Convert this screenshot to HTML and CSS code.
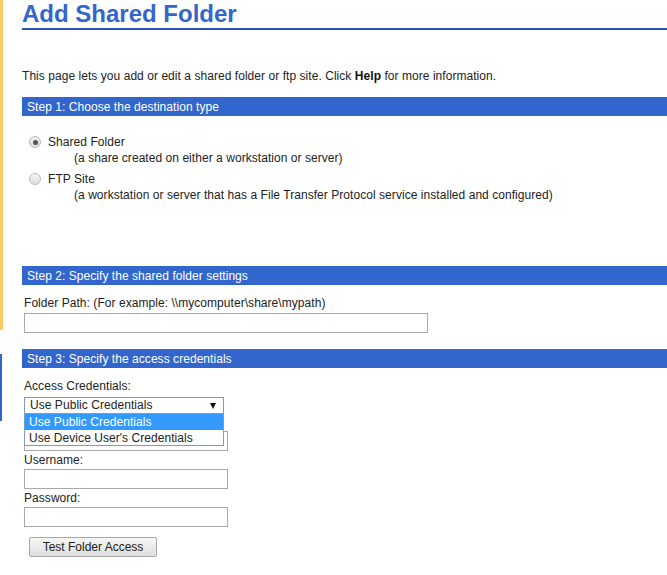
FILE: index.html
```html
<!DOCTYPE html>
<html lang="en">
<head>
<meta charset="utf-8">
<title>Add Shared Folder</title>
<link rel="stylesheet" href="styles.css">
</head>
<body>
<div class="page">
  <aside class="side">
    <div class="side-top"></div>
    <div class="side-bottom"></div>
  </aside>
  <main class="content">
    <h1 class="title">Add Shared Folder</h1>
    <p class="intro">This page lets you add or edit a shared folder or ftp site. Click <b>Help</b> for more information.</p>

    <section class="step step-1">
      <h2 class="step-bar">Step 1: Choose the destination type</h2>
      <div class="radio-group">
        <div class="radio-row first"><span class="radio checked"></span><span>Shared Folder</span></div>
        <div class="radio-desc">(a share created on either a workstation or server)</div>
        <div class="radio-row"><span class="radio"></span><span>FTP Site</span></div>
        <div class="radio-desc">(a workstation or server that has a File Transfer Protocol service installed and configured)</div>
      </div>
    </section>

    <section class="step step-2">
      <h2 class="step-bar">Step 2: Specify the shared folder settings</h2>
      <div class="field first">
        <div class="label">Folder Path: (For example: \\mycomputer\share\mypath)</div>
        <div class="input wide"></div>
      </div>
    </section>

    <section class="step step-3">
      <h2 class="step-bar">Step 3: Specify the access credentials</h2>
      <div class="field first">
        <div class="label">Access Credentials:</div>
        <div class="select-wrap">
          <div class="select"><span>Use Public Credentials</span><span class="arrow"></span></div>
          <ul class="dropdown">
            <li class="option active">Use Public Credentials</li>
            <li class="option">Use Device User's Credentials</li>
          </ul>
        </div>
      </div>
      <div class="field">
        <div class="label hidden-label">Domain:</div>
        <div class="input under"></div>
      </div>
      <div class="field">
        <div class="label">Username:</div>
        <div class="input"></div>
      </div>
      <div class="field">
        <div class="label">Password:</div>
        <div class="input"></div>
      </div>
      <button class="btn" type="button">Test Folder Access</button>
    </section>
  </main>
</div>
</body>
</html>
```

FILE: styles.css
```css
html, body {
  margin: 0;
  padding: 0;
  background: #ffffff;
}

body {
  font-family: "Liberation Sans", Arial, sans-serif;
  font-size: 12px;
  letter-spacing: 0.05px;
  color: #222222;
  overflow: hidden;
}

.page {
  display: flex;
  align-items: flex-start;
  min-height: 575px;
}

.side {
  width: 3px;
  flex: 0 0 3px;
  display: flex;
  flex-direction: column;
}

.side-top {
  height: 330px;
  background: #fcc860;
  border-radius: 0 0 2px 2px;
}

.side-bottom {
  margin-top: 24px;
  height: 67px;
  width: 2px;
  background: #3366cc;
}

.content {
  flex: 1;
  margin-left: 19px;
  min-width: 0;
}

.title {
  margin: 0;
  font-size: 24px;
  line-height: 27px;
  font-weight: bold;
  letter-spacing: 0;
  color: #3366cc;
  padding-bottom: 1px;
  border-bottom: 2px solid #2856b0;
}

.intro {
  margin: 38px 0 0 0;
  line-height: 16px;
}

.intro b {
  color: #111111;
}

.step-bar {
  margin: 0;
  height: 19px;
  line-height: 20px;
  background: #3366cc;
  color: #ffffff;
  font-size: 12px;
  font-weight: normal;
  padding-left: 5px;
}

.step-1 {
  margin-top: 13px;
}

.radio-group {
  padding-left: 7px;
  line-height: 16px;
}

.radio-row {
  display: flex;
  align-items: center;
  margin-top: 5px;
}

.radio-row.first {
  margin-top: 18px;
}

.radio {
  width: 10px;
  height: 10px;
  border: 1px solid #b8b8b8;
  border-radius: 50%;
  background: linear-gradient(#f4f4f4, #dcdcdc);
  margin-right: 7px;
  position: relative;
  flex: 0 0 auto;
}

.radio.checked::after {
  content: "";
  position: absolute;
  left: 2.5px;
  top: 2.5px;
  width: 5px;
  height: 5px;
  border-radius: 50%;
  background: #555555;
}

.radio-desc {
  padding-left: 45px;
}

.step-2 {
  margin-top: 63px;
}

.field {
  padding-left: 2px;
}

.field.first {
  margin-top: 9px;
}

.label {
  padding-top: 2px;
  line-height: 15px;
}

.hidden-label {
  visibility: hidden;
}

.input {
  box-sizing: border-box;
  width: 204px;
  height: 20px;
  margin-top: 1px;
  border: 1px solid #a9a9a9;
  background: #ffffff;
}

.input.wide {
  width: 404px;
  margin-top: 2px;
}

.input.under {
  margin-top: 0;
}

.step-3 {
  margin-top: 16px;
}

.select-wrap {
  position: relative;
  width: 200px;
  margin-top: 3px;
}

.select {
  box-sizing: border-box;
  height: 17px;
  border: 1px solid #7a9ad0;
  display: flex;
  align-items: center;
  justify-content: space-between;
  padding: 0 7px 0 5px;
  line-height: 15px;
  background: #ffffff;
}

.arrow {
  width: 0;
  height: 0;
  border-left: 3.5px solid transparent;
  border-right: 3.5px solid transparent;
  border-top: 6px solid #111111;
}

.dropdown {
  position: absolute;
  left: 0;
  top: 17px;
  box-sizing: border-box;
  width: 200px;
  margin: 0;
  padding: 0;
  list-style: none;
  background: #ffffff;
  border: 1px solid #7a9ad0;
  border-top: none;
  z-index: 2;
}

.option {
  height: 15.5px;
  line-height: 16px;
  padding-left: 4px;
  color: #222222;
}

.option.active {
  background: #3399ff;
  color: #ffffff;
}

.btn {
  display: block;
  margin: 10px 0 0 7px;
  box-sizing: border-box;
  width: 128px;
  height: 20px;
  padding: 0;
  font-family: "Liberation Sans", Arial, sans-serif;
  font-size: 12px;
  color: #222222;
  background: linear-gradient(#f6f6f6, #dedede);
  border: 1px solid #a8a8a8;
  border-radius: 2px;
}
```
